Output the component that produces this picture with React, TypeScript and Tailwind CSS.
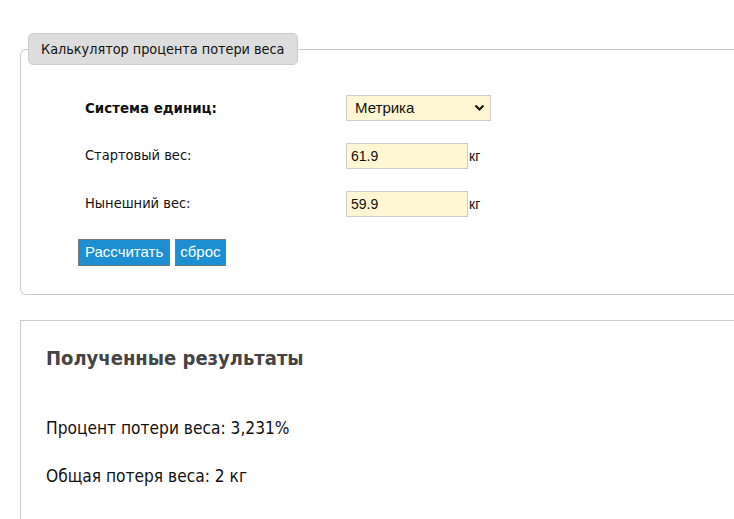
import { useState } from "react";

const tahoma = { fontFamily: '"DejaVu Sans Condensed", "DejaVu Sans", sans-serif' };

export default function App() {
  const [units, setUnits] = useState("metric");
  const [start, setStart] = useState("61.9");
  const [current, setCurrent] = useState("59.9");

  const inputCls =
    "w-[122px] h-[26px] px-[4px] bg-[#fff6d3] border border-[#ccc] text-[14px] text-[#111] outline-none";

  return (
    <div className="w-[734px] h-[519px] overflow-hidden bg-white" style={{ fontFamily: '"Liberation Sans", Arial, sans-serif' }}>
      <fieldset className="mt-[33px] ml-[20px] w-[760px] border border-[#ccc] rounded-[6px] pb-[28px]">
        <legend
          className="ml-[7px] px-[12px] h-[32px] leading-[30px] bg-[#ddd] border border-[#ccc] rounded-[5px] text-[14.3px] text-[#111]"
          style={tahoma}
        >
          Калькулятор процента потери веса
        </legend>

        <div className="pt-[19px] pl-[64px] text-[#111]">
          <div className="flex items-center h-[48px]">
            <span className="w-[261px] font-bold text-[14.9px]" style={tahoma}>Система единиц:</span>
            <div className="relative">
              <select
                value={units}
                onChange={(e) => setUnits(e.target.value)}
                className="appearance-none w-[145px] h-[26px] pl-[8px] bg-[#fff6d3] border border-[#ccc] text-[15px] text-[#111] outline-none"
              >
                <option value="metric">Метрика</option>
                <option value="imperial">Имперская</option>
              </select>
              <svg
                className="absolute right-[6px] top-[8px] pointer-events-none"
                width="11"
                height="9"
                viewBox="0 0 11 9"
              >
                <path d="M1.5 2.5 L5.5 6.5 L9.5 2.5" fill="none" stroke="#111" strokeWidth="2" />
              </svg>
            </div>
          </div>
          <div className="flex items-center h-[48px]">
            <span className="w-[261px] text-[14.5px]" style={tahoma}>Стартовый вес:</span>
            <input value={start} onChange={(e) => setStart(e.target.value)} className={inputCls} />
            <span className="ml-[1px] text-[14px]">кг</span>
          </div>
          <div className="flex items-center h-[48px]">
            <span className="w-[261px] text-[14.5px]" style={tahoma}>Нынешний вес:</span>
            <input value={current} onChange={(e) => setCurrent(e.target.value)} className={inputCls} />
            <span className="ml-[1px] text-[14px]">кг</span>
          </div>
        </div>

        <div className="flex gap-[5px] mt-[11px] ml-[57px]">
          <button className="h-[27px] px-[6px] bg-[#1b8fd1] border border-[#777] text-white text-[15px]">
            Рассчитать
          </button>
          <button className="h-[27px] px-[4px] bg-[#1b8fd1] border border-[#777] text-white text-[15px]">
            сброс
          </button>
        </div>
      </fieldset>

      <div className="mt-[25px] ml-[20px] w-[760px] h-[300px] border border-[#ccc] pl-[25px] pt-[25px]" style={tahoma}>
        <h2 className="text-[20px] font-bold text-[#444] leading-[24px]">Полученные результаты</h2>
        <p className="mt-[46px] text-[17.2px] text-[#111] leading-[24px]">Процент потери веса: 3,231%</p>
        <p className="mt-[24px] text-[17.2px] text-[#111] leading-[24px]">Общая потеря веса: 2 кг</p>
      </div>
    </div>
  );
}
